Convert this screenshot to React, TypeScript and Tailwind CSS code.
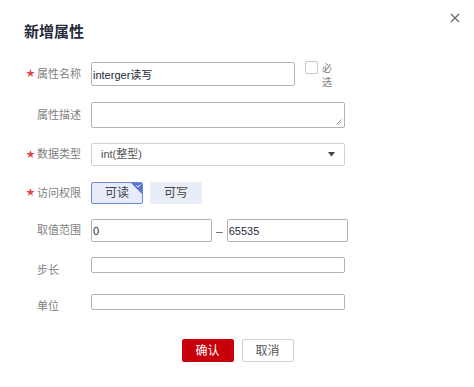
export default function App() {
  const font = { fontFamily: '"Liberation Sans", "Noto Sans CJK SC", sans-serif' }

  const Label = ({ text, required }: { text: string; required?: boolean }) => (
    <div className="flex w-[91px] shrink-0 items-center pl-[26px] text-[11px] text-[#808080]">
      <span className="w-[11px] text-[9px] text-[#e0464f]">{required ? '★' : ''}</span>
      <span>{text}</span>
    </div>
  )

  return (
    <div className="relative h-[387px] w-[474px] bg-white" style={font}>
      <button className="absolute left-[450px] top-[13px] text-[#555]">
        <svg width="10" height="10" viewBox="0 0 10 10">
          <path d="M1 1L9 9M9 1L1 9" stroke="#666" strokeWidth="1.2" />
        </svg>
      </button>

      <h1 className="pl-[24px] pt-[20px] text-[15px] leading-[24px] font-bold text-[#252b3a]">新增属性</h1>

      <div className="mt-[18px] flex flex-col">
        <div className="flex h-[24px] items-center">
          <Label text="属性名称" required />
          <input
            readOnly
            value="interger读写"
            className="h-[24px] w-[204px] rounded-[2px] border border-[#b4b4b4] px-[1px] text-[11px] text-[#252b3a] outline-none"
          />
          <div className="ml-[10px] flex items-start self-start">
            <span className="mt-[-1px] h-[13px] w-[13px] rounded-[2px] border border-[#c8c8c8]" />
            <span className="ml-[4px] w-[11px] text-[10px] leading-[14px] text-[#808080]">必选</span>
          </div>
        </div>

        <div className="mt-[16px] flex h-[26px] items-center">
          <Label text="属性描述" />
          <div className="relative h-[26px] w-[254px] rounded-[2px] border border-[#b4b4b4]">
            <svg className="absolute bottom-[2px] right-[2px]" width="6" height="6" viewBox="0 0 6 6">
              <path d="M5.5 0.5L0.5 5.5M5.5 3L3 5.5" stroke="#777" strokeWidth="0.8" />
            </svg>
          </div>
        </div>

        <div className="mt-[15px] flex h-[23px] items-center">
          <Label text="数据类型" required />
          <div className="flex h-[23px] w-[254px] items-center justify-between rounded-[2px] border border-[#d0d0d0] pl-[9px] pr-[9px] text-[11px] text-[#555]">
            <span>int(整型)</span>
            <svg width="7" height="5" viewBox="0 0 7 5">
              <path d="M0 0H7L3.5 4.5Z" fill="#444" />
            </svg>
          </div>
        </div>

        <div className="mt-[16px] flex h-[22px] items-center">
          <Label text="访问权限" required />
          <div className="relative flex h-[22px] w-[52px] items-center justify-center overflow-hidden rounded-[2px] border border-[#6e88d6] bg-[#e6ecfa] text-[12px] text-[#444]">
            可读
            <svg className="absolute right-0 top-0" width="11" height="11" viewBox="0 0 11 11">
              <path d="M0 0H11V11Z" fill="#5a78d2" />
              <path d="M5.5 2.5L7 4L9.5 1.5" stroke="#fff" strokeWidth="1" fill="none" />
            </svg>
          </div>
          <div className="ml-[7px] flex h-[22px] w-[52px] items-center justify-center rounded-[2px] bg-[#e8edf8] text-[12px] text-[#444]">
            可写
          </div>
        </div>

        <div className="mt-[15px] flex h-[23px] items-center">
          <Label text="取值范围" />
          <input
            readOnly
            value="0"
            className="h-[23px] w-[121px] rounded-[2px] border border-[#b4b4b4] px-[1px] text-[11px] text-[#252b3a] outline-none"
          />
          <span className="mx-[4px] mt-[3px] text-[12px] text-[#666]">–</span>
          <input
            readOnly
            value="65535"
            className="h-[23px] w-[121px] rounded-[2px] border border-[#b4b4b4] px-[1px] text-[11px] text-[#252b3a] outline-none"
          />
        </div>

        <div className="mt-[15px] flex h-[21px] items-start">
          <div className="pt-[5px]">
            <Label text="步长" />
          </div>
          <div className="h-[16px] w-[254px] rounded-[2px] border border-[#b4b4b4]" />
        </div>

        <div className="mt-[16px] flex h-[21px] items-start">
          <div className="pt-[4px]">
            <Label text="单位" />
          </div>
          <div className="h-[16px] w-[254px] rounded-[2px] border border-[#b4b4b4]" />
        </div>

        <div className="mt-[24px] flex justify-center gap-[8px] pl-[1px]">
          <button className="h-[23px] w-[52px] rounded-[2px] bg-[#c7000b] text-[12px] text-white">确认</button>
          <button className="h-[23px] w-[52px] rounded-[2px] border border-[#d0d0d0] bg-white text-[12px] text-[#555]">取消</button>
        </div>
      </div>
    </div>
  )
}
